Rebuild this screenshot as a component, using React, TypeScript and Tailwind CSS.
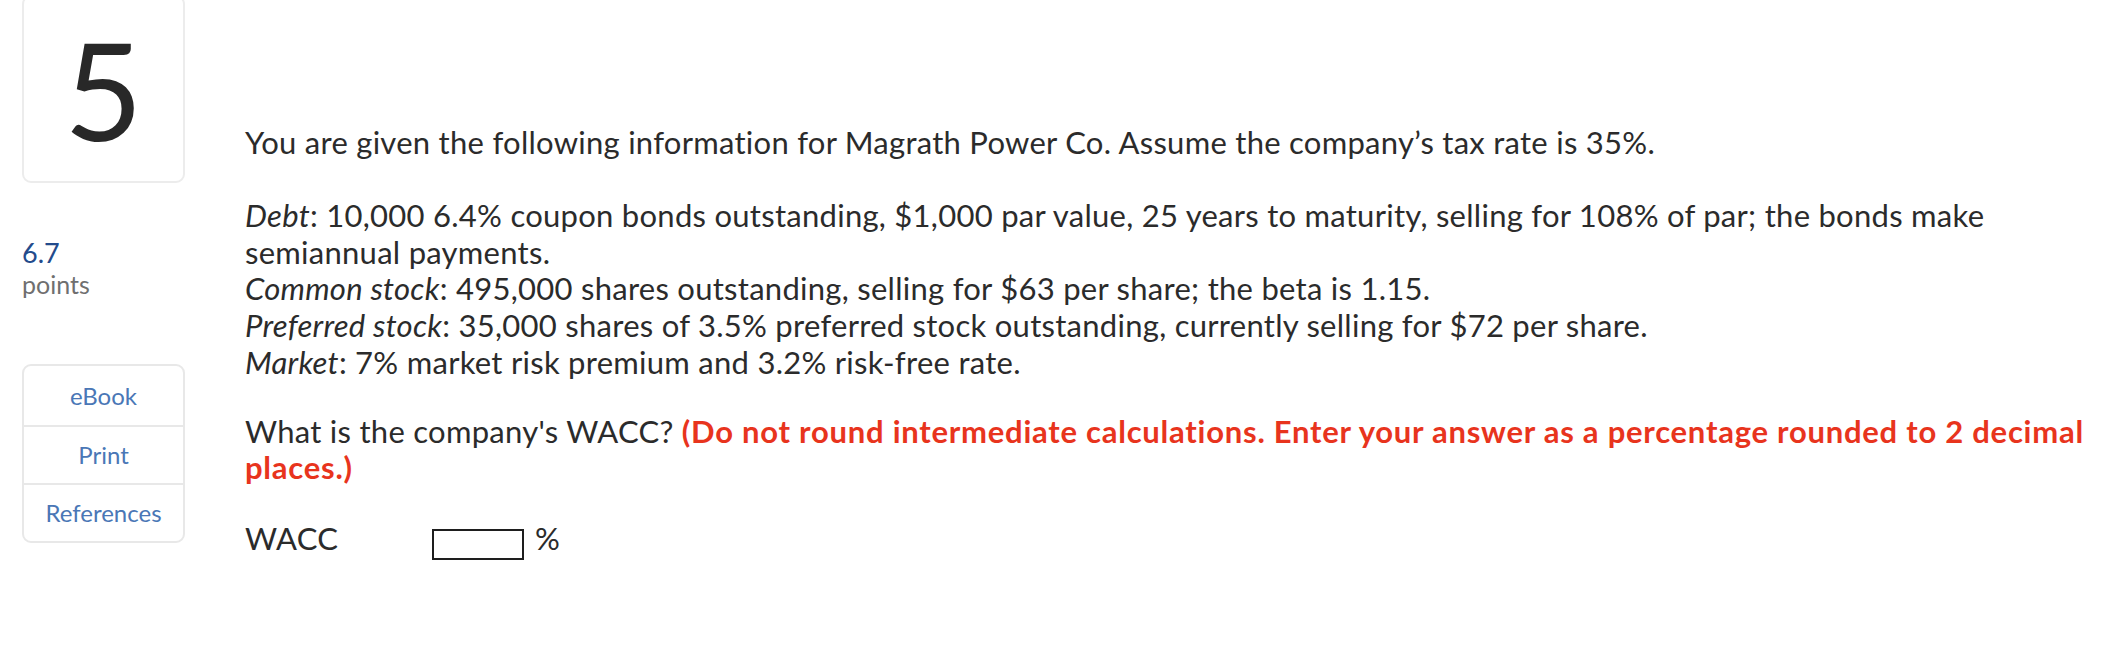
import React from 'react'

const links = ['eBook', 'Print', 'References']

export default function App() {
    return (
        <div className="flex h-[662px] w-[2116px] overflow-hidden bg-white font-['Lato','Liberation_Sans',sans-serif] text-[#2b2b2b]">
            {/* left rail */}
            <aside className="w-[245px] shrink-0 pl-[22px]">
                <div className="-mt-[5px] flex h-[188px] w-[163px] items-center justify-center rounded-[9px] border-2 border-[#ececec]">
                    <span className="text-[136px] leading-[140px] text-[#282828]">5</span>
                </div>

                <div className="mt-[53px]">
                    <div className="text-[27px] leading-[34px] text-[#234b8c]">6.7</div>
                    <div className="text-[25px] leading-[28px] text-[#6f6f6f]">points</div>
                </div>

                <div className="mt-[66px] w-[163px] overflow-hidden rounded-[9px] border-2 border-[#e8e8e8]">
                    {links.map((label, i) => (
                        <div
                            key={label}
                            className={`flex items-center justify-center text-[24px] text-[#4a77b6] ${i === 0 ? 'h-[59px]' : 'h-[58px] border-t-2 border-[#e8e8e8]'}`}
                        >
                            {label}
                        </div>
                    ))}
                </div>
            </aside>

            {/* question */}
            <main className="flex-1 pr-[16px] pt-[124px] text-[31px] leading-[36.75px] tracking-[0.27px]">
                <p>You are given the following information for Magrath Power Co. Assume the company’s tax rate is 35%.</p>

                <p className="mt-[36px]">
                    <i>Debt</i>: 10,000 6.4% coupon bonds outstanding, $1,000 par value, 25 years to maturity, selling for 108% of par; the bonds make semiannual payments.
                    <br />
                    <i>Common stock</i>: 495,000 shares outstanding, selling for $63 per share; the beta is 1.15.
                    <br />
                    <i>Preferred stock</i>: 35,000 shares of 3.5% preferred stock outstanding, currently selling for $72 per share.
                    <br />
                    <i>Market</i>: 7% market risk premium and 3.2% risk-free rate.
                </p>

                <p className="mt-[32px]">
                    What is the company's WACC?{' '}
                    <b className="font-bold tracking-[0.75px] text-[#e8341d]">
                        (Do not round intermediate calculations. Enter your answer as a percentage rounded to 2 decimal places.)
                    </b>
                </p>

                <div className="mt-[34px] flex items-start">
                    <span className="w-[187px]">WACC</span>
                    <input type="text" className="mt-[9px] h-[31px] w-[92px] border-2 border-[#1e1e1e] bg-white outline-none" />
                    <span className="ml-[11px]">%</span>
                </div>
            </main>
        </div>
    )
}
